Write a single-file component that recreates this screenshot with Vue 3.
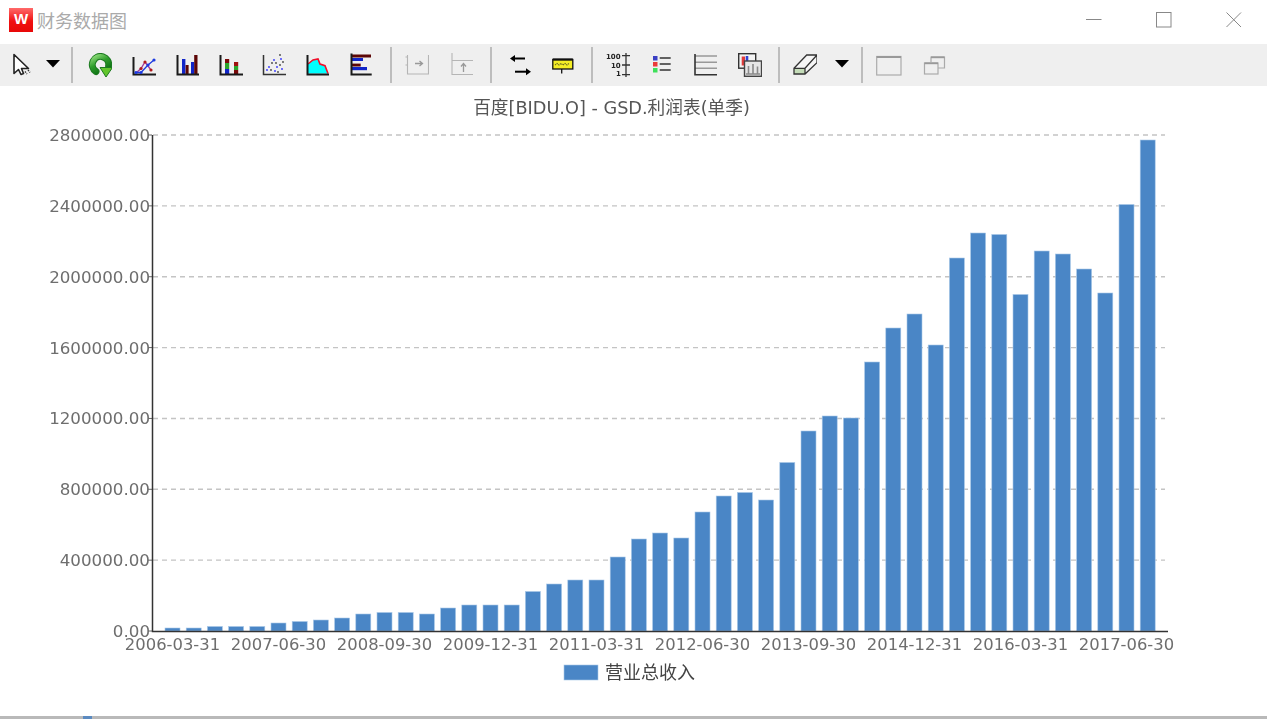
<script setup>
const tops = [628,628,626.5,626.5,626.5,623,621.5,620,618,614,612.5,612.5,614,608,605,605,605,591.5,584,580,580,557,539,533,538,512,496,492.5,500,462.5,431,416,418,362,328,314,345,258,233,234.5,294.5,251,254,269,293,204.5,140]
const base = 631
const bars = tops.map((t, i) => ({ x: 165 + i * 21.2, y: t, h: base - t }))
const ticks = ['2800000.00','2400000.00','2000000.00','1600000.00','1200000.00','800000.00','400000.00','0.00']
  .map((label, i) => ({ label, y: 135 + i * 70.86 }))
const dates = ['2006-03-31','2007-06-30','2008-09-30','2009-12-31','2011-03-31','2012-06-30','2013-09-30','2014-12-31','2016-03-31','2017-06-30']
  .map((label, i) => ({ label, x: 172.5 + i * 106 }))
const dots = [[7,14,'#33f'],[10,10,'#444'],[12,7,'#33f'],[14,10,'#444'],[5,17,'#33f'],[9,17,'#444'],[15,14,'#33f'],[18,12,'#444'],[13,18,'#33f'],[19,6,'#33f'],[21,9,'#444'],[18,2,'#444'],[20,16,'#33f'],[16,19,'#444']]
</script>

<template>
  <div class="win">
    <header class="titlebar">
      <div class="logo">W</div>
      <span class="title">财务数据图</span>
      <div class="controls">
        <svg class="ctl" viewBox="0 0 16 16"><path d="M0 7.5H15.5" /></svg>
        <svg class="ctl" viewBox="0 0 16 16"><rect x="0.5" y="0.5" width="14.5" height="14.5" /></svg>
        <svg class="ctl" viewBox="0 0 16 16"><path d="M0.5 0.5L15 15M15 0.5L0.5 15" /></svg>
      </div>
    </header>

    <div class="toolbar">
      <div class="group g1">
        <svg class="ico" viewBox="0 0 24 24"><path d="M4 1.5V20.5L8.5 16.5L11 21.5L13.5 20.5L11.5 15.5H18.5Z" fill="#fff" stroke="#222" stroke-width="1.6" stroke-linejoin="round"/><path d="M15 18.5l2 2.5M18 17l2 2.5" stroke="#333" stroke-width="1.4" stroke-dasharray="1.5 1"/></svg>
        <svg class="drop" viewBox="0 0 16 24"><path d="M1 7H15L8 14.5Z" fill="#000"/></svg>
      </div>
      <i class="sep s1"></i>
      <div class="group g2">
        <svg class="ico" viewBox="0 0 24 24">
          <defs><linearGradient id="gr" x1="0" y1="0" x2="0.6" y2="1"><stop offset="0" stop-color="#8fdc7a"/><stop offset="0.5" stop-color="#2f9d2c"/><stop offset="1" stop-color="#0f7414"/></linearGradient></defs>
          <path d="M8 18.5A8.2 8.2 0 1 1 20.6 13" fill="none" stroke="#1c7a20" stroke-width="7" stroke-linecap="round"/>
          <path d="M8 18.5A8.2 8.2 0 1 1 20.6 13" fill="none" stroke="url(#gr)" stroke-width="5" stroke-linecap="round"/>
          <path d="M12 14.5H24.5L18 24Z" fill="#62c52c" stroke="#1c7a20" stroke-width="1" stroke-linejoin="round"/>
        </svg>
        <svg class="ico" viewBox="0 0 24 24"><path d="M1.5 4V21.5H24" class="ax"/><path d="M4 20L9 15.5L13 9L19 17" stroke="#a23b9c" stroke-width="1.3" fill="none"/><path d="M3 19.5H9L16 12L22 7" stroke="#1d3be0" stroke-width="1.3" fill="none"/><g fill="#b01a1a"><circle cx="9" cy="15.5" r="1.6"/><circle cx="13" cy="9" r="1.6"/><circle cx="19" cy="17" r="1.6"/></g><g fill="#1d3be0"><circle cx="4" cy="19.5" r="1.6"/><circle cx="9" cy="19.5" r="1.6"/><circle cx="16" cy="12" r="1.6"/><circle cx="22" cy="7" r="1.6"/></g></svg>
        <svg class="ico" viewBox="0 0 24 24"><rect x="7" y="6" width="3.4" height="15" fill="#1024c8"/><rect x="10.6" y="12" width="3" height="9" fill="#5c0606"/><rect x="16" y="9" width="3.2" height="12" fill="#1024c8"/><rect x="19.2" y="2" width="3.3" height="19" fill="#5c0606"/><path d="M2.5 2V21.5H24" class="ax"/></svg>
        <svg class="ico" viewBox="0 0 24 24"><rect x="6" y="6" width="4.2" height="4" fill="#7a0a0a"/><rect x="6" y="10" width="4.2" height="6" fill="#2aa52a"/><rect x="6" y="16" width="4.2" height="5" fill="#1024c8"/><rect x="15" y="9" width="4.2" height="4" fill="#a01010"/><rect x="15" y="13" width="4.2" height="4" fill="#2aa52a"/><rect x="15" y="17" width="4.2" height="4" fill="#7a0a0a"/><path d="M1.5 2V21.5H24" class="ax"/></svg>
        <svg class="ico" viewBox="0 0 24 24"><circle v-for="(d, i) in dots" :key="i" :cx="d[0]" :cy="d[1]" r="0.9" :fill="d[2]"/><path d="M1.5 2V21.5H24" class="ax-thin"/></svg>
        <svg class="ico" viewBox="0 0 24 24"><path d="M2 11L7 7L12 6L14 11L19 12.7L22 20.5H2Z" fill="#00ffff"/><path d="M2 11L7 7L12 6L14 11L19 12.7L22 20.5" fill="none" stroke="#f0102a" stroke-width="1.6"/><path d="M1.5 2V21.5H23" class="ax"/></svg>
        <svg class="ico" viewBox="0 0 24 24"><rect x="3" y="1.5" width="19" height="3" fill="#5c0606"/><rect x="3" y="5" width="11" height="3" fill="#1024c8"/><rect x="3" y="10.6" width="8.7" height="2.9" fill="#5c0606"/><rect x="3" y="14" width="15" height="3.2" fill="#1024c8"/><path d="M2.5 0.5V21.5H22.7" class="ax"/></svg>
      </div>
      <i class="sep s2"></i>
      <div class="group g3">
        <svg class="ico" viewBox="0 0 24 24"><path d="M2.5 2V21H24M23.5 2V21M0.5 4H2.5M0.5 12H2.5" class="dis"/><path d="M10 10.5H17M14.5 8L17.5 10.5L14.5 13" class="dis2"/></svg>
        <svg class="ico" viewBox="0 0 24 24"><path d="M2 0V21.5H23M2 7.5H23M2 4V5" class="dis"/><path d="M13.5 19V11M11 13.5L13.5 10.5L16 13.5" class="dis2"/></svg>
      </div>
      <i class="sep s3"></i>
      <div class="group g4">
        <svg class="ico" viewBox="0 0 24 24"><path d="M5 5.5H18" class="arr"/><path d="M8 2L3 5.5L8 9Z" fill="#000"/><path d="M8 18.7H21" class="arr"/><path d="M19 15.2L24 18.7L19 22.2Z" fill="#000"/></svg>
        <svg class="ico" viewBox="0 0 24 24"><rect x="1.8" y="6.5" width="20" height="9.5" fill="#f5ee25" stroke="#111" stroke-width="1.3"/><path d="M1.8 6.5H21.8" stroke="#111" stroke-width="2.2"/><path d="M4 12l2-1.5 2 1.5 2-1.5 2 1.5 2-1.5 2 1.5 2-1.5" fill="none" stroke="#6a6a20" stroke-width="1.1" stroke-dasharray="1.4 .6"/><path d="M10.7 16V20.5" stroke="#111" stroke-width="1.3"/></svg>
      </div>
      <i class="sep s4"></i>
      <div class="group g5">
        <svg class="ico" viewBox="0 0 24 24"><text x="0" y="6" class="log">100</text><text x="5" y="15" class="log">10</text><text x="10" y="23" class="log">1</text><path d="M20 0V24M16 2.7H24M16 12H24M16 21.7H24" stroke="#333" stroke-width="1.3"/></svg>
        <svg class="ico" viewBox="0 0 24 24"><rect x="3" y="3" width="4.5" height="4.5" fill="#3b3fc4"/><rect x="3" y="9" width="4.5" height="4.5" fill="#ea3a3a"/><rect x="3" y="15" width="4.5" height="4.5" fill="#3ee05a"/><path d="M9.7 5H20.7M9.7 11H20.7M9.7 17H20.7" stroke="#333" stroke-width="1.4"/></svg>
        <svg class="ico" viewBox="0 0 24 24"><path d="M1 3H23M1 9.3H23M1 15.3H23" stroke="#999" stroke-width="1.4"/><path d="M1 1V21.7H23" stroke="#333" stroke-width="1.6" fill="none"/></svg>
        <svg class="ico" viewBox="0 0 24 24"><rect x="0.7" y="0.7" width="17" height="14.5" fill="#f4f4f4" stroke="#333" stroke-width="1.4"/><rect x="3.7" y="3.5" width="3.3" height="9" fill="#e03a3a"/><rect x="7.7" y="3" width="2.6" height="5" fill="#3343d0"/><rect x="6.5" y="8" width="17" height="15.3" fill="#e6e6e6" stroke="#444" stroke-width="1.4"/><path d="M10.5 20.5V13M15 20.5V11M19.5 20.5V13.5M8 21H22" stroke="#8a8a8a" stroke-width="1.6"/></svg>
      </div>
      <i class="sep s5"></i>
      <div class="group g6">
        <svg class="ico" viewBox="0 0 24 24"><path d="M1 15.3L13.7 2H24L24 9.7L12 21H1Z" fill="#f6f6f6"/><path d="M1 15.5H12V21H1Z" fill="#c4dcb8"/><path d="M1 15.3L13.7 2H24V9.7L12 21H1ZM1 15.3H12V21M12 15.3L24 2" fill="none" stroke="#333" stroke-width="1.3"/></svg>
        <svg class="drop" viewBox="0 0 16 24"><path d="M1 7H15L8 14.5Z" fill="#000"/></svg>
      </div>
      <i class="sep s6"></i>
      <div class="group g7">
        <svg class="ico wide" viewBox="0 0 26 24"><rect x="0.7" y="3.5" width="24.3" height="18.5" fill="none" stroke="#aaa" stroke-width="1.2"/><path d="M0.7 4H25" stroke="#999" stroke-width="2"/></svg>
        <svg class="ico" viewBox="0 0 24 24"><path d="M9 9V4H22.5V15H16" fill="none" stroke="#aaa" stroke-width="1.2"/><path d="M9 4.3H22.5" stroke="#999" stroke-width="1.8"/><rect x="2.5" y="10" width="13.5" height="11" fill="none" stroke="#aaa" stroke-width="1.2"/><path d="M2.5 10.3H16" stroke="#999" stroke-width="1.8"/></svg>
      </div>
    </div>

    <svg class="chart" viewBox="0 86 1267 630">
      <text x="611.5" y="114" class="ctitle">百度[BIDU.O] - GSD.利润表(单季)</text>
      <g v-for="t in ticks" :key="t.label">
        <line v-if="t.y < 630" x1="153" :y1="t.y" x2="1165" :y2="t.y" class="grid" />
        <line x1="148" :y1="t.y" x2="152" :y2="t.y" class="tick" />
        <text x="150" :y="t.y + 6" class="ylab">{{ t.label }}</text>
      </g>
      <rect v-for="(b, i) in bars" :key="i" :x="b.x" :y="b.y" width="15" :height="b.h" class="bar" />
      <path d="M152.5 135V631.5H1168" class="axis" />
      <text v-for="d in dates" :key="d.label" :x="d.x" y="650" class="xlab">{{ d.label }}</text>
      <rect x="564" y="665" width="34" height="15" class="swatch" />
      <text x="605" y="679" class="legend">营业总收入</text>
    </svg>

    <footer class="strip"><span class="thumb"></span></footer>
  </div>
</template>

<style scoped>
.win { height: 719px; display: flex; flex-direction: column; background: #fff; overflow: hidden; font-family: "Noto Sans CJK SC", "Noto Sans", sans-serif; }
.titlebar { height: 44px; flex: none; display: flex; align-items: center; padding: 0 25px 4px 9px; box-sizing: border-box; }
.logo { width: 24px; height: 24px; background: linear-gradient(#ff6a6a, #f01010 55%, #e80808); color: #fff; font: bold 15px/22px "Liberation Sans", sans-serif; text-align: center; }
.title { margin-left: 4px; font-size: 18px; color: #aaa; line-height: 24px; }
.controls { margin-left: auto; display: flex; gap: 54px; }
.ctl { width: 16px; height: 16px; fill: none; stroke: #888; stroke-width: 1; }
.toolbar { height: 42px; flex: none; display: flex; align-items: center; background: #efefef; padding-left: 10px; }
.group { display: flex; align-items: center; gap: 20px; }
.ico { width: 24px; height: 24px; flex: none; filter: blur(0.3px); }
.wide { width: 26px; }
.drop { width: 16px; height: 24px; flex: none; }
.sep { width: 2px; height: 36px; background: #bdbdbd; flex: none; }
.g1 { gap: 11px; }
.g2 { gap: 19.5px; }
.g3 { gap: 21px; }
.g6 { gap: 17px; }
.g7 { gap: 20px; }
.s1 { margin: 0 15px 0 10px; }
.s2 { margin: 0 13px 0 17px; }
.s3 { margin: 0 15px 0 16px; }
.s4 { margin: 0 13px 0 16px; }
.s5 { margin: 0 13px 0 16px; }
.s6 { margin: 0 13px 0 11px; }
.ax { fill: none; stroke: #1a1a1a; stroke-width: 2; }
.ax-thin { fill: none; stroke: #333; stroke-width: 1.5; }
.dis { fill: none; stroke: #b5b5b5; stroke-width: 1.1; }
.dis2 { fill: none; stroke: #999; stroke-width: 1.3; }
.arr { stroke: #000; stroke-width: 2; }
.log { font: bold 7px "DejaVu Sans", sans-serif; fill: #222; }
.chart { flex: 1; min-height: 0; display: block; width: 1267px; filter: blur(0.25px); }
.ctitle { font-size: 17.7px; fill: #555; text-anchor: middle; font-family: "DejaVu Sans", "Noto Sans CJK SC", sans-serif; }
.grid { stroke: #c4c4c4; stroke-width: 1.4; stroke-dasharray: 5 4; }
.tick { stroke: #666; stroke-width: 1; }
.ylab, .xlab { font-family: "DejaVu Sans", sans-serif; fill: #6e6e6e; }
.ylab { text-anchor: end; font-size: 16.7px; }
.xlab { text-anchor: middle; font-size: 16.4px; }
.bar, .swatch { fill: #4a86c6; stroke: #a9c8e8; stroke-width: 0.6; }
.axis { fill: none; stroke: #333; stroke-width: 1.5; }
.legend { font-size: 18px; fill: #444; }
.strip { height: 3px; flex: none; background: #b9b9b9; position: relative; }
.thumb { position: absolute; left: 83px; top: 0; width: 9px; height: 3px; background: #5b8ac0; }
</style>

<style>
html, body { margin: 0; overflow: hidden; background: #fff; }
</style>
